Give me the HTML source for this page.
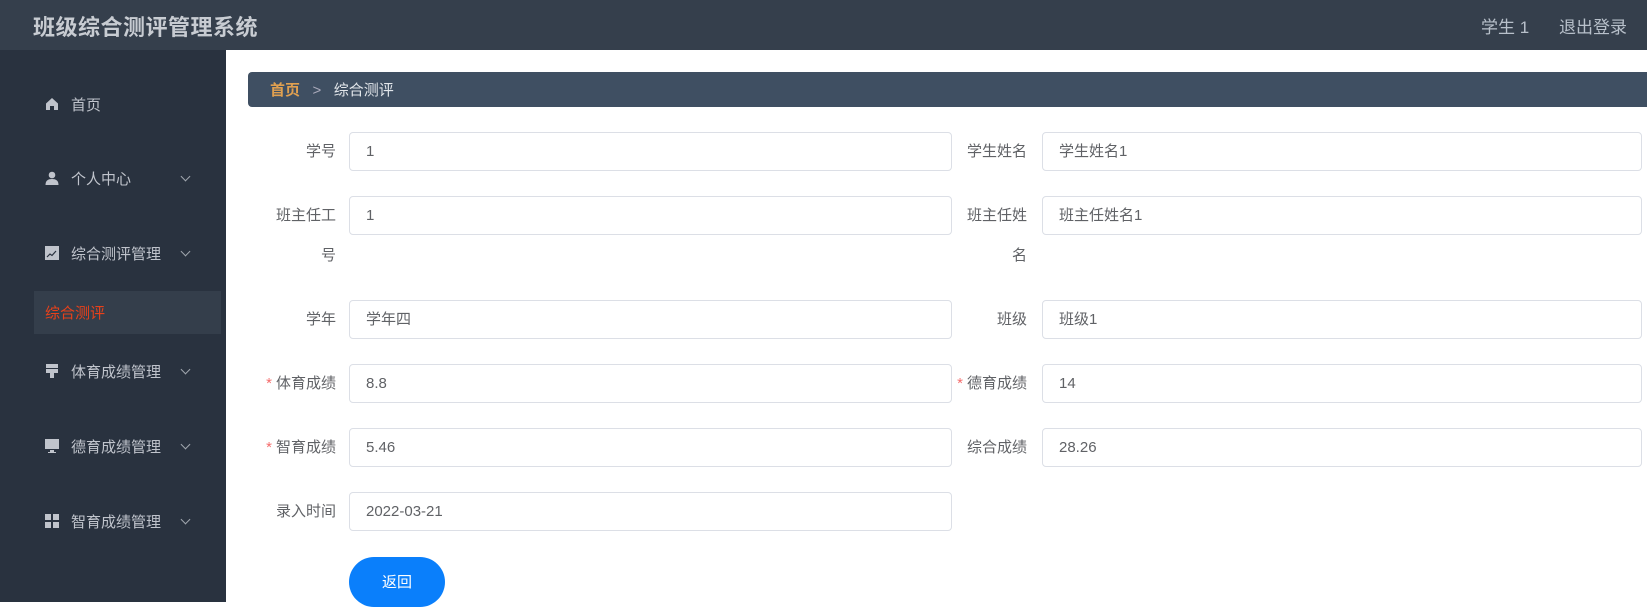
<!DOCTYPE html>
<html><head><meta charset="utf-8"><style>
*{margin:0;padding:0;box-sizing:border-box}
body{width:1647px;height:602px;overflow:hidden;background:#fff;font-family:"Liberation Sans","Noto Sans CJK SC",sans-serif;position:relative}
.hd{position:absolute;left:0;top:0;width:1647px;height:50px;background:#353f4c}
.title{position:absolute;left:33px;top:10px;font-size:22px;font-weight:bold;color:#c8ccd2;letter-spacing:0.5px}
.hr{position:absolute;top:13px;font-size:17px;color:#b8c0ca}
.sb{position:absolute;left:0;top:50px;width:226px;height:552px;background:#29323f}
.it{position:absolute;left:45px;font-size:15px;color:#c0c4cc;display:flex;align-items:center;height:20px}
.it svg{margin-right:12px}
.arr{position:absolute;left:182px;width:7px;height:7px;border-right:1.3px solid #a0a6ae;border-bottom:1.3px solid #a0a6ae;transform:rotate(45deg)}
.act{position:absolute;left:34px;top:291px;width:187px;height:43px;background:#343e4b;color:#e8411a;font-size:15px;padding:11px 0 0 11px}
.bc{position:absolute;left:248px;top:72px;width:1399px;height:35px;background:#3f4f62;border-radius:4px 0 0 4px;font-size:15px;color:#e2e6ea;padding:7px 0 0 22px}
.bc b{color:#e0a050;font-weight:bold}
.lb{position:absolute;font-size:15px;color:#606266;text-align:right;width:90px;line-height:39px}
.in{position:absolute;height:39px;border:1px solid #dcdfe6;border-radius:4px;font-size:15px;color:#606266;padding:0 16px;line-height:37px}
.st{color:#f56c6c;margin-right:4px}
.btn{position:absolute;left:349px;top:557px;width:96px;height:50px;border-radius:25px;background:#0a7ffb;color:#fff;font-size:15px;text-align:center;padding-top:14px}
</style></head><body>
<div class="hd"><div class="title">班级综合测评管理系统</div>
<div class="hr" style="left:1481px">学生 1</div><div class="hr" style="left:1559px">退出登录</div></div>
<div class="sb"></div>
<div class="it" style="top:94px"><svg width="14" height="14" viewBox="0 0 14 14"><path d="M7 1L1 6.5V13H5V9H9V13H13V6.5Z" fill="#c0c4cc"/></svg>首页</div>
<div class="it" style="top:168px"><svg width="14" height="14" viewBox="0 0 14 14"><circle cx="7" cy="4" r="3.3" fill="#c0c4cc"/><path d="M0.5 14C0.5 9.5 3 8 7 8S13.5 9.5 13.5 14Z" fill="#c0c4cc"/></svg>个人中心</div><div class="arr" style="top:173px"></div>
<div class="it" style="top:243px"><svg width="14" height="14" viewBox="0 0 14 14"><rect x="0" y="0" width="14" height="14" fill="#c0c4cc"/><path d="M2 11L5 8L7 9.5L11 5" stroke="#29323f" stroke-width="1.2" fill="none"/></svg>综合测评管理</div><div class="arr" style="top:248px"></div>
<div class="act">综合测评</div>
<div class="it" style="top:361px"><svg width="14" height="14" viewBox="0 0 14 14"><rect x="1" y="0" width="12" height="4" fill="#c0c4cc"/><rect x="1" y="5" width="12" height="4" fill="#c0c4cc"/><rect x="5" y="9" width="4" height="5" fill="#c0c4cc"/></svg>体育成绩管理</div><div class="arr" style="top:366px"></div>
<div class="it" style="top:436px"><svg width="14" height="14" viewBox="0 0 14 14"><rect x="0" y="0" width="14" height="10" fill="#c0c4cc"/><rect x="5" y="11" width="4" height="2" fill="#c0c4cc"/><rect x="3" y="13" width="8" height="1" fill="#c0c4cc"/></svg>德育成绩管理</div><div class="arr" style="top:441px"></div>
<div class="it" style="top:511px"><svg width="14" height="14" viewBox="0 0 14 14"><rect x="0" y="0" width="6" height="6" fill="#c0c4cc"/><rect x="8" y="0" width="6" height="6" fill="#c0c4cc"/><rect x="0" y="8" width="6" height="6" fill="#c0c4cc"/><rect x="8" y="8" width="6" height="6" fill="#c0c4cc"/></svg>智育成绩管理</div><div class="arr" style="top:516px"></div>
<div class="bc"><b>首页</b>&nbsp;&nbsp;&nbsp;<span style="color:#aab">&gt;</span>&nbsp;&nbsp;&nbsp;综合测评</div>

<div class="lb" style="left:246px;top:132px">学号</div><div class="in" style="left:349px;top:132px;width:603px">1</div>
<div class="lb" style="left:937px;top:132px">学生姓名</div><div class="in" style="left:1042px;top:132px;width:600px">学生姓名1</div>
<div class="lb" style="left:246px;top:196px;line-height:40px">班主任工<br>号</div><div class="in" style="left:349px;top:196px;width:603px">1</div>
<div class="lb" style="left:937px;top:196px;line-height:40px">班主任姓<br>名</div><div class="in" style="left:1042px;top:196px;width:600px">班主任姓名1</div>
<div class="lb" style="left:246px;top:300px">学年</div><div class="in" style="left:349px;top:300px;width:603px">学年四</div>
<div class="lb" style="left:937px;top:300px">班级</div><div class="in" style="left:1042px;top:300px;width:600px">班级1</div>
<div class="lb" style="left:236px;top:364px;width:100px"><span class="st">*</span>体育成绩</div><div class="in" style="left:349px;top:364px;width:603px">8.8</div>
<div class="lb" style="left:927px;top:364px;width:100px"><span class="st">*</span>德育成绩</div><div class="in" style="left:1042px;top:364px;width:600px">14</div>
<div class="lb" style="left:236px;top:428px;width:100px"><span class="st">*</span>智育成绩</div><div class="in" style="left:349px;top:428px;width:603px">5.46</div>
<div class="lb" style="left:937px;top:428px">综合成绩</div><div class="in" style="left:1042px;top:428px;width:600px">28.26</div>
<div class="lb" style="left:246px;top:492px">录入时间</div><div class="in" style="left:349px;top:492px;width:603px">2022-03-21</div>
<div class="btn">返回</div>
</body></html>
